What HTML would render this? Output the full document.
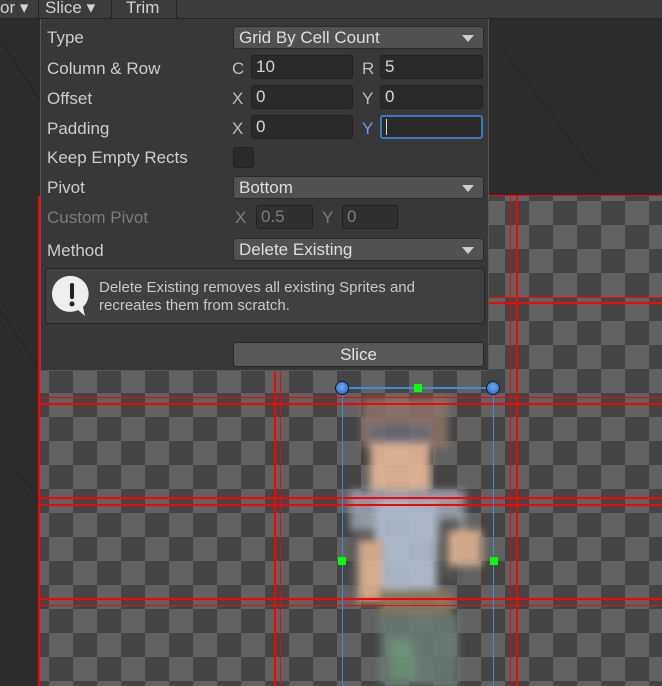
<!DOCTYPE html>
<html><head><meta charset="utf-8"><style>
*{margin:0;padding:0;box-sizing:border-box}
body{width:662px;height:686px;overflow:hidden;background:#2c2c2c;font-family:"Liberation Sans",sans-serif;position:relative;color:#c8c8c8}
.a{position:absolute}
.tb{left:0;top:0;width:662px;height:19px;background:#3c3c3c;border-bottom:1px solid #232323}
.tbt{font-size:17px;top:-2px;color:#d2d2d2}
.sep{top:0;width:1px;height:19px;background:#232323}
.chk{left:39px;top:196px;width:623px;height:490px;background:conic-gradient(#444 25%,#626262 0 50%,#444 0 75%,#626262 0);background-size:48px 48px;background-position:10px 5px}
.rh{background:#f00;left:39px;width:623px}
.rv{background:#f00;width:2px}
.panel{left:40px;top:19px;width:449px;height:352px;background:#383838;border:1px solid #575757;border-top:none}
.lbl{font-size:17px;color:#cdcdcd;left:47px}
.dd{left:233px;width:251px;height:23px;background:#515151;border:1px solid #2a2a2a;border-radius:3px;font-size:17px;color:#dedede;padding-left:5px;line-height:21px}
.dd:after{content:"";position:absolute;right:9px;top:8px;border-left:6px solid transparent;border-right:6px solid transparent;border-top:7px solid #cfcfcf}
.fld{height:24px;background:#2a2a2a;border:1px solid #212121;border-radius:3px;font-size:17px;color:#d6d6d6;padding-left:4px;line-height:22px}
.sm{font-size:17px;color:#bdbdbd}
</style></head><body>
<svg class="a" style="left:0;top:20px" width="662" height="666"><g stroke="#242424" stroke-width="1"><line x1="0" y1="20" x2="60" y2="110"/><line x1="0" y1="290" x2="40" y2="350"/><line x1="500" y1="25" x2="600" y2="160"/><line x1="0" y1="430" x2="40" y2="480"/></g></svg>
<div class="a tb"></div>
<div class="a tbt" style="left:0">or &#9662;</div>
<div class="a sep" style="left:38px"></div>
<div class="a tbt" style="left:45px">Slice &#9662;</div>
<div class="a sep" style="left:111px"></div>
<div class="a tbt" style="left:126px">Trim</div>
<div class="a sep" style="left:176px"></div>

<div class="a chk"></div>
<!-- sprite -->
<div class="a" style="left:330px;top:390px;width:160px;height:296px;filter:blur(4px);opacity:.85">
<div class="a" style="left:32px;top:8px;width:86px;height:50px;background:#8f7568"></div>
<div class="a" style="left:40px;top:35px;width:60px;height:18px;background:#6b6a78"></div>
<div class="a" style="left:40px;top:52px;width:60px;height:55px;background:#f0bd9c"></div>
<div class="a" style="left:20px;top:100px;width:115px;height:50px;background:#9ea4b0"></div>
<div class="a" style="left:45px;top:110px;width:62px;height:100px;background:#b9c6d8"></div>
<div class="a" style="left:20px;top:140px;width:24px;height:60px;background:#555"></div>
<div class="a" style="left:110px;top:130px;width:20px;height:60px;background:#555"></div>
<div class="a" style="left:28px;top:150px;width:24px;height:62px;background:#e8b894"></div>
<div class="a" style="left:118px;top:140px;width:34px;height:36px;background:#e8b894"></div>
<div class="a" style="left:50px;top:200px;width:72px;height:30px;background:#8a7d60"></div>
<div class="a" style="left:50px;top:225px;width:78px;height:70px;background:#6c7d78"></div>
<div class="a" style="left:60px;top:250px;width:25px;height:40px;background:#6f9a7c"></div>
</div>
<!-- red lines -->
<div class="a rh" style="top:195px;height:1px;left:489px;width:173px"></div>
<div class="a rh" style="top:297px;height:1px;left:489px;width:173px"></div>
<div class="a rh" style="top:302px;height:2px;left:489px;width:173px"></div>
<div class="a rh" style="top:397px;height:1px"></div>
<div class="a rh" style="top:403px;height:2px"></div>
<div class="a rh" style="top:497px;height:2px"></div>
<div class="a rh" style="top:504px;height:2px"></div>
<div class="a rh" style="top:598px;height:2px"></div>
<div class="a rh" style="top:605px;height:1px"></div>
<div class="a rv" style="left:38px;top:196px;height:490px"></div>
<div class="a rv" style="left:274px;top:371px;height:315px"></div>
<div class="a rv" style="left:280px;top:371px;height:315px;width:1px"></div>
<div class="a rv" style="left:510px;top:196px;height:490px;width:1px"></div>
<div class="a rv" style="left:516px;top:196px;height:490px"></div>
<!-- blue rect -->
<div class="a" style="left:342px;top:388px;width:1px;height:298px;background:#3a8ed4"></div>
<div class="a" style="left:493px;top:388px;width:1px;height:298px;background:#3a8ed4"></div>
<div class="a" style="left:342px;top:387px;width:151px;height:2px;background:#3a8ed4"></div>
<div class="a" style="left:335px;top:381px;width:14px;height:14px;border-radius:50%;background:radial-gradient(circle at 50% 40%,#6aaaf0,#1f63c8);border:1px solid #1a1a1a"></div>
<div class="a" style="left:486px;top:381px;width:14px;height:14px;border-radius:50%;background:radial-gradient(circle at 50% 40%,#6aaaf0,#1f63c8);border:1px solid #1a1a1a"></div>
<div class="a" style="left:414px;top:384px;width:8px;height:8px;background:#0f0"></div>
<div class="a" style="left:338px;top:557px;width:8px;height:8px;background:#0f0"></div>
<div class="a" style="left:490px;top:557px;width:8px;height:8px;background:#0f0"></div>

<!-- panel -->
<div class="a panel"></div>
<div class="a lbl" style="top:28px">Type</div>
<div class="a dd" style="top:26px">Grid By Cell Count</div>
<div class="a lbl" style="top:59px">Column &amp; Row</div>
<div class="a sm" style="left:232px;top:59px">C</div>
<div class="a fld" style="left:251px;top:55px;width:102px">10</div>
<div class="a sm" style="left:362px;top:59px">R</div>
<div class="a fld" style="left:380px;top:55px;width:103px">5</div>
<div class="a lbl" style="top:89px">Offset</div>
<div class="a sm" style="left:232px;top:89px">X</div>
<div class="a fld" style="left:251px;top:85px;width:102px">0</div>
<div class="a sm" style="left:362px;top:89px">Y</div>
<div class="a fld" style="left:380px;top:85px;width:103px">0</div>
<div class="a lbl" style="top:119px">Padding</div>
<div class="a sm" style="left:232px;top:119px">X</div>
<div class="a fld" style="left:251px;top:115px;width:102px">0</div>
<div class="a sm" style="left:362px;top:119px;color:#6f9be0">Y</div>
<div class="a fld" style="left:380px;top:115px;width:103px;border:2px solid #3d78c4"><span style="display:inline-block;width:1px;height:16px;background:#ddd;margin-top:2px"></span></div>
<div class="a lbl" style="top:148px">Keep Empty Rects</div>
<div class="a" style="left:233px;top:147px;width:21px;height:21px;background:#2a2a2a;border:1px solid #212121;border-radius:3px"></div>
<div class="a lbl" style="top:178px">Pivot</div>
<div class="a dd" style="top:176px">Bottom</div>
<div class="a lbl" style="top:208px;color:#7c7c7c">Custom Pivot</div>
<div class="a sm" style="left:235px;top:208px;color:#7c7c7c">X</div>
<div class="a fld" style="left:256px;top:205px;width:57px;background:#303030;color:#7c7c7c">0.5</div>
<div class="a sm" style="left:322px;top:208px;color:#7c7c7c">Y</div>
<div class="a fld" style="left:342px;top:205px;width:56px;background:#303030;color:#7c7c7c">0</div>
<div class="a lbl" style="top:241px">Method</div>
<div class="a dd" style="top:238px">Delete Existing</div>
<div class="a" style="left:45px;top:268px;width:440px;height:56px;background:#404040;border:1px solid #252525;border-radius:3px"></div>
<svg class="a" style="left:52px;top:274px" width="40" height="44"><path d="M20 2a18 18 0 1 0 6 34l7 6-2-9A18 18 0 0 0 20 2z" fill="#eee"/><rect x="18" y="9" width="4" height="16" rx="2" fill="#222"/><circle cx="20" cy="30" r="2.5" fill="#222"/></svg>
<div class="a" style="left:99px;top:279px;font-size:15px;line-height:18px;color:#c8c8c8">Delete Existing removes all existing Sprites and<br>recreates them from scratch.</div>
<div class="a" style="left:233px;top:342px;width:251px;height:25px;background:#585858;border:1px solid #262626;border-radius:3px;text-align:center;font-size:17px;line-height:23px;color:#e4e4e4">Slice</div>
</body></html>
